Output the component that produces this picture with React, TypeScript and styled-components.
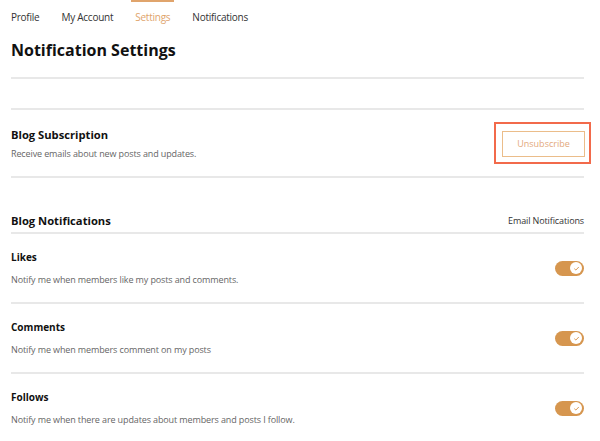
import * as React from "react";
import styled, { createGlobalStyle } from "styled-components";

const GlobalStyle = createGlobalStyle`
  body {
    margin: 0;
    background: #ffffff;
    font-family: "Open Sans", "Liberation Sans", sans-serif;
    color: #222;
  }
`;

const Page = styled.div`
  padding: 0 16px 0 11px;
`;

const Tabs = styled.nav`
  display: flex;
  gap: 14px;
  height: 32px;
  margin-left: -4px;
`;

const Tab = styled.div<{ $active?: boolean }>`
  display: flex;
  align-items: center;
  padding: 0 4px;
  font-size: 10px;
  letter-spacing: -0.25px;
  color: ${(p) => (p.$active ? "#e0a46c" : "#333")};
  border-top: 2px solid ${(p) => (p.$active ? "#e0a46c" : "transparent")};
  box-sizing: border-box;
`;

const Title = styled.h1`
  margin: 0;
  height: 36px;
  display: flex;
  align-items: center;
  font-size: 16px;
  font-weight: 700;
  color: #111;
`;

const Divider = styled.div`
  height: 2px;
  background: #e8e8e8;
`;

const Spacer = styled.div<{ $h: number }>`
  height: ${(p) => p.$h}px;
`;

const Row = styled.div<{ $h: number }>`
  display: flex;
  align-items: center;
  justify-content: space-between;
  height: ${(p) => p.$h}px;
`;

const Text = styled.div`
  display: flex;
  flex-direction: column;
`;

const Heading = styled.div`
  font-size: 11.2px;
  font-weight: 700;
  color: #111;
`;

const SubHeading = styled.div`
  font-size: 10px;
  font-weight: 700;
  color: #111;
`;

const Desc = styled.div<{ $gap: number }>`
  margin-top: ${(p) => p.$gap}px;
  font-size: 9px;
  letter-spacing: -0.12px;
  color: #666;
`;

const Highlight = styled.div`
  border: 2px solid #f26a4b;
  padding: 6px 4px 5px 6px;
  margin-right: -7px;
`;

const OutlineButton = styled.button`
  width: 83px;
  height: 26px;
  background: #fff;
  border: 1px solid #ebbd8a;
  color: #e3a97c;
  font-family: inherit;
  font-size: 9px;
  padding: 0;
`;

const ColumnLabel = styled.div`
  font-size: 9px;
  letter-spacing: -0.12px;
  color: #333;
`;

const Track = styled.div`
  width: 29px;
  height: 15px;
  border-radius: 8px;
  background: #d6964f;
  display: flex;
  align-items: center;
  justify-content: flex-end;
  padding-right: 2px;
  box-sizing: border-box;
`;

const Knob = styled.div`
  width: 12px;
  height: 12px;
  border-radius: 50%;
  background: #fff;
  display: flex;
  align-items: center;
  justify-content: center;
`;

function Toggle() {
  return (
    <Track>
      <Knob>
        <svg width="7" height="7" viewBox="0 0 8 8">
          <path d="M1.5 4.2 L3.3 5.8 L6.6 2.3" fill="none" stroke="#d6964f" strokeWidth="1.1" />
        </svg>
      </Knob>
    </Track>
  );
}

const items = [
  { title: "Likes", desc: "Notify me when members like my posts and comments." },
  { title: "Comments", desc: "Notify me when members comment on my posts" },
  { title: "Follows", desc: "Notify me when there are updates about members and posts I follow." },
];

export default function App() {
  return (
    <Page>
      <GlobalStyle />
      <Tabs>
        <Tab>Profile</Tab>
        <Tab>My Account</Tab>
        <Tab $active>Settings</Tab>
        <Tab>Notifications</Tab>
      </Tabs>
      <Title>Notification Settings</Title>
      <Spacer $h={9} />
      <Divider />
      <Spacer $h={29} />
      <Divider />
      <Row $h={66}>
        <Text>
          <Heading>Blog Subscription</Heading>
          <Desc $gap={5}>Receive emails about new posts and updates.</Desc>
        </Text>
        <Highlight>
          <OutlineButton>Unsubscribe</OutlineButton>
        </Highlight>
      </Row>
      <Divider />
      <Row $h={54}>
        <Heading style={{ marginTop: 30 }}>Blog Notifications</Heading>
        <ColumnLabel style={{ marginTop: 30 }}>Email Notifications</ColumnLabel>
      </Row>
      <Divider />
      {items.map((it, i) => (
        <React.Fragment key={it.title}>
          {i > 0 && <Divider />}
          <Row $h={68}>
            <Text>
              <SubHeading>{it.title}</SubHeading>
              <Desc $gap={9}>{it.desc}</Desc>
            </Text>
            <Toggle />
          </Row>
        </React.Fragment>
      ))}
    </Page>
  );
}
